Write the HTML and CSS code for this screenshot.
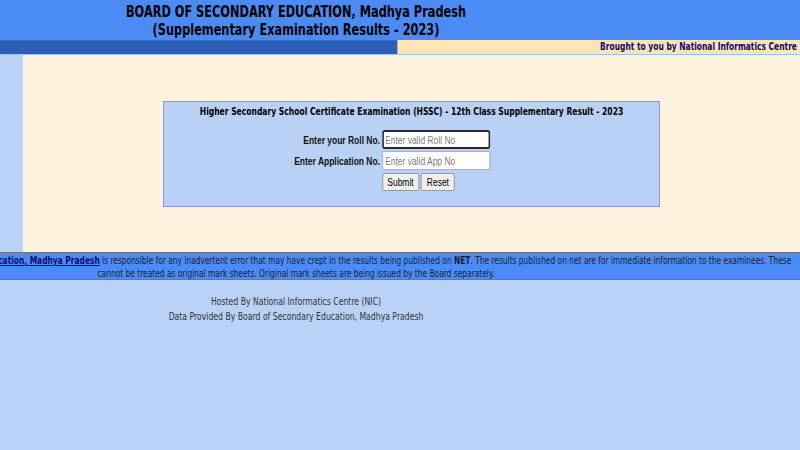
FILE: index.html
```html
<!DOCTYPE html>
<html>
<head>
<meta charset="utf-8">
<title>MP Board Supplementary Result 2023</title>
<link rel="stylesheet" href="styles.css">
</head>
<body>
<div class="page">
  <header class="header">
    <div class="title">BOARD OF SECONDARY EDUCATION, Madhya Pradesh<br>(Supplementary Examination Results - 2023)</div>
  </header>
  <div class="subbar">
    <div class="subbar-left"></div>
    <div class="subbar-right"><div class="credit">Brought to you by National Informatics Centre</div></div>
  </div>
  <main class="main">
    <div class="strip"></div>
    <div class="content">
      <form class="formbox">
        <div class="ftitle">Higher Secondary School Certificate Examination (HSSC) - 12th Class Supplementary Result - 2023</div>
        <div class="grid">
          <label class="lbl" for="roll">Enter your Roll No.</label>
          <input class="inp focus" id="roll" type="text" placeholder="Enter valid Roll No">
          <label class="lbl" for="app">Enter Application No.</label>
          <input class="inp" id="app" type="text" placeholder="Enter valid App No">
          <span></span>
          <div class="btns">
            <button type="button" class="btn btn-submit">Submit</button>
            <button type="reset" class="btn btn-reset">Reset</button>
          </div>
        </div>
      </form>
    </div>
  </main>
  <div class="disclaimer">
    <div class="disc-inner">The <a href="#" class="dlink">Board of Secondary Education, Madhya Pradesh</a> is responsible for any inadvertent error that may have crept in the results being published on <b>NET</b>. The results published on net are for immediate information to the examinees. These<br>cannot be treated as original mark sheets. Original mark sheets are being issued by the Board separately.</div>
  </div>
  <footer class="footer">
    <div class="foot-inner">Hosted By National Informatics Centre (NIC)<br>Data Provided By Board of Secondary Education, Madhya Pradesh</div>
  </footer>
</div>
</body>
</html>
```
FILE: styles.css
```css
html, body {
  margin: 0;
  padding: 0;
  background: #b9d2f6;
  overflow: hidden;
}
body {
  font-family: "DejaVu Sans", "Liberation Sans", sans-serif;
  font-stretch: condensed;
  width: 800px;
  height: 450px;
}
.page {
  width: 800px;
  overflow: hidden;
}

/* header */
.header {
  height: 40px;
  background: #4b8bf5;
  box-sizing: border-box;
  padding: 3px 208px 0 0;
}
.title {
  text-align: center;
  font-weight: bold;
  font-size: 16.5px;
  line-height: 18px;
  color: #000;
  white-space: nowrap;
  transform: scaleX(0.764);
  transform-origin: 50% 0;
}

/* sub bar */
.subbar {
  display: flex;
  height: 14px;
  border-bottom: 1px solid #9fc2ee;
}
.subbar-left {
  width: 397px;
  background: #2c5fb8;
  border-top: 1px solid #3a6cc6;
  box-sizing: border-box;
}
.subbar-right {
  flex: 1;
  background: #ffe4b5;
  border-left: 1px solid #c9a98a;
  overflow: hidden;
}
.credit {
  text-align: right;
  font-weight: bold;
  font-size: 11px;
  line-height: 14px;
  color: #0a0a66;
  padding-right: 4px;
  white-space: nowrap;
  transform: scaleX(0.76);
  transform-origin: 100% 0;
}

/* main */
.main {
  display: flex;
  height: 197px;
}
.strip {
  width: 23px;
  background: #b9d2f6;
}
.content {
  flex: 1;
  background: #fef3df;
  padding-top: 46px;
}
.formbox {
  width: 495px;
  height: 85px;
  margin: 0 auto;
  border: 1px solid #8a98e2;
  background: #b9d1f5;
  padding: 3px 0 16px;
  box-sizing: content-box;
}
.ftitle {
  margin: 0 -80px 11px;
  text-align: center;
  font-weight: bold;
  font-size: 11px;
  line-height: 14px;
  color: #000;
  white-space: nowrap;
  transform: scaleX(0.768);
  transform-origin: 50% 0;
}
.grid {
  display: grid;
  grid-template-columns: 216px 1fr;
  column-gap: 2.6px;
  row-gap: 2px;
  align-items: center;
  font-family: "Liberation Sans", Arial, sans-serif;
  font-stretch: normal;
  transform: scaleX(0.77);
  transform-origin: 216px 0;
}
.lbl {
  text-align: right;
  font-weight: bold;
  font-size: 11px;
  color: #111;
  white-space: nowrap;
}
.inp {
  width: 140px;
  height: 19px;
  box-sizing: border-box;
  border: 1px solid #a9a9a9;
  background: #fff;
  padding: 0 3px;
  margin: 0;
  font-family: inherit;
  font-size: 11px;
  border-radius: 1px;
}
.inp.focus {
  border: 2px solid #2a2a2a;
  border-radius: 3px;
  padding: 0 2px;
}
.inp::placeholder {
  color: #808080;
}
.btns {
  display: flex;
  gap: 2.6px;
  margin-top: 1px;
}
.btn {
  height: 18px;
  box-sizing: border-box;
  padding: 0;
  margin: 0;
  border: 1px solid #8f8f8f;
  border-radius: 2px;
  background: #efefef;
  font-family: inherit;
  font-size: 11px;
  color: #000;
}
.btn-submit { width: 48px; }
.btn-reset { width: 44px; }

/* disclaimer */
.disclaimer {
  background: #4b8bf5;
  border-top: 1px solid #7d7468;
  border-bottom: 1px solid #7d7468;
  height: 25px;
  padding-top: 1px;
  overflow: hidden;
}
.disc-inner {
  width: 1600px;
  margin-left: -504px;
  text-align: center;
  text-indent: 106px;
  white-space: nowrap;
  font-size: 11px;
  line-height: 13px;
  color: #1b1d38;
  transform: scaleX(0.755);
  transform-origin: 50% 0;
}
.dlink {
  color: #0b0b6e;
  font-weight: bold;
}

/* footer */
.footer {
  padding: 14px 208px 0 0;
}
.foot-inner {
  text-align: center;
  font-size: 11px;
  line-height: 15px;
  color: #333;
  white-space: nowrap;
  transform: scaleX(0.78);
  transform-origin: 50% 0;
}
```
